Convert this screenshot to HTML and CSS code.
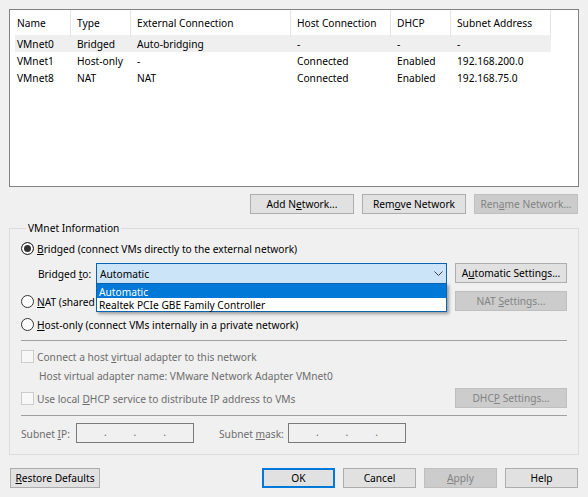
FILE: index.html
```html
<!DOCTYPE html>
<html>
<head>
    <title>Virtual Network Editor</title>
    <link rel="stylesheet" href="styles.css">
</head>
<body>
    <div class="dialog">
        <div class="net-list">
            <div class="list-head">
                <div>Name</div>
                <div>Type</div>
                <div>External Connection</div>
                <div>Host Connection</div>
                <div>DHCP</div>
                <div>Subnet Address</div>
            </div>
            <div class="list-row hot">
                <div>VMnet0</div><div>Bridged</div><div>Auto-bridging</div><div>-</div><div>-</div><div>-</div>
            </div>
            <div class="list-row">
                <div>VMnet1</div><div>Host-only</div><div>-</div><div>Connected</div><div>Enabled</div><div>192.168.200.0</div>
            </div>
            <div class="list-row">
                <div>VMnet8</div><div>NAT</div><div>NAT</div><div>Connected</div><div>Enabled</div><div>192.168.75.0</div>
            </div>
        </div>

        <div class="list-buttons">
            <button class="btn btn-wide">Add N<u>e</u>twork...</button>
            <button class="btn btn-wide">Rem<u>o</u>ve Network</button>
            <button class="btn btn-wide" disabled>Ren<u>a</u>me Network...</button>
        </div>

        <fieldset class="group">
            <legend>VMnet Information</legend>

            <div class="opt opt-bridged">
                <span class="radio on"></span>
                <span class="lbl"><u>B</u>ridged (connect VMs directly to the external network)</span>
            </div>

            <div class="bridge-row">
                <span class="bridge-label">Bridged <u>t</u>o:</span>
                <div class="combo">
                    <span>Automatic</span>
                    <svg width="9" height="5" viewBox="0 0 9 5"><polyline points="0.5,0.5 4.5,4.5 8.5,0.5" fill="none" stroke="#404040" stroke-width="1"/></svg>
                    <div class="combo-list">
                        <div class="combo-item sel">Automatic</div>
                        <div class="combo-item">Realtek PCIe GBE Family Controller</div>
                    </div>
                </div>
                <button class="btn btn-side">A<u>u</u>tomatic Settings...</button>
            </div>

            <div class="opt opt-nat">
                <span class="radio"></span>
                <span class="lbl"><u>N</u>AT (shared host's IP address with VMs)</span>
                <button class="btn btn-side" disabled>NAT <u>S</u>ettings...</button>
            </div>

            <div class="opt opt-host">
                <span class="radio"></span>
                <span class="lbl"><u>H</u>ost-only (connect VMs internally in a private network)</span>
            </div>

            <div class="sep"></div>

            <div class="opt opt-adapter off">
                <span class="check"></span>
                <span class="lbl">Connect a host <u>v</u>irtual adapter to this network</span>
            </div>
            <div class="adapter-name off">Host virtual adapter name: VMware Network Adapter VMnet0</div>

            <div class="opt opt-dhcp off">
                <span class="check"></span>
                <span class="lbl">Use local <u>D</u>HCP service to distribute IP address to VMs</span>
                <button class="btn btn-side" disabled>DHC<u>P</u> Settings...</button>
            </div>

            <div class="sep sep-low"></div>

            <div class="subnet-row off">
                <span class="lbl ip-label">Subnet <u>I</u>P:</span>
                <div class="ip-box"><span>.</span><span>.</span><span>.</span></div>
                <span class="lbl mask-label">Subnet <u>m</u>ask:</span>
                <div class="ip-box"><span>.</span><span>.</span><span>.</span></div>
            </div>
        </fieldset>

        <div class="dialog-buttons">
            <button class="btn btn-restore"><u>R</u>estore Defaults</button>
            <div class="main-buttons">
                <button class="btn btn-small btn-default">OK</button>
                <button class="btn btn-small">Cancel</button>
                <button class="btn btn-small" disabled><u>A</u>pply</button>
                <button class="btn btn-small">Help</button>
            </div>
        </div>
    </div>
</body>
</html>
```

FILE: styles.css
```css
* {
    box-sizing: border-box;
}
body {
    margin: 0;
    background: #f0f0f0;
    font-family: "Noto Sans", sans-serif;
    font-size: 10.2px;
    color: #000;
    white-space: nowrap;
}
.dialog {
    width: 588px;
    padding: 9px 9px 0 9px;
}
.net-list {
    height: 178px;
    border: 1px solid #828282;
    background: #fff;
}
.list-head {
    display: grid;
    grid-template-columns: 61px 60px 160px 100px 60px 100px;
    height: 25px;
}
.list-head div {
    border-right: 1px solid #e5e5e5;
    padding-left: 6px;
    line-height: 27px;
}
.list-head div:first-child {
    padding-left: 7px;
}
.list-row {
    display: grid;
    grid-template-columns: 56px 60px 160px 100px 60px 100px;
    width: max-content;
    margin-left: 5px;
    height: 17px;
}
.list-row div {
    padding-left: 6px;
    line-height: 19px;
}
.list-row div:first-child {
    padding-left: 2px;
}
.list-row.hot {
    background: #efefef;
}
.btn {
    height: 20px;
    padding: 0;
    font: inherit;
    color: #000;
    background: #e1e1e1;
    border: 1px solid #adadad;
}
.btn:disabled {
    background: #cccccc;
    border-color: #bfbfbf;
    color: #838383;
}
.btn-wide {
    width: 104px;
}
.btn-side {
    width: 112px;
    margin-left: auto;
}
.btn-small {
    width: 73px;
}
.btn-default {
    border: 2px solid #0078d7;
}
.btn-restore {
    width: 90px;
    margin-left: 1px;
}
.list-buttons {
    display: flex;
    justify-content: flex-end;
    gap: 8px;
    margin-top: 7px;
    padding-right: 1px;
}
.group {
    margin: 6px 0 0;
    padding: 0 11px 11px;
    border: 1px solid #dcdcdc;
    min-width: 0;
}
.group legend {
    margin-left: 5px;
    padding: 0 2px;
    line-height: 16px;
}
.opt {
    display: flex;
    align-items: center;
    height: 16px;
}
.lbl {
    padding-top: 2px;
}
.opt-bridged {
    margin-top: 4px;
}
.opt-nat {
    margin-top: 7px;
    height: 20px;
}
.opt-host {
    margin-top: 5px;
}
.opt-adapter {
    margin-top: 7px;
}
.opt-dhcp {
    margin-top: 5px;
    height: 20px;
}
.radio {
    flex: none;
    width: 13px;
    height: 13px;
    margin-right: 3px;
    border: 1px solid #333;
    border-radius: 50%;
    background: #fff;
}
.radio.on {
    background: #333;
    box-shadow: inset 0 0 0 2px #fff;
}
.check {
    flex: none;
    width: 13px;
    height: 13px;
    margin-right: 3px;
    border: 1px solid #cccccc;
    background: #f7f7f7;
}
.off {
    color: #6d6d6d;
}
.bridge-row {
    display: flex;
    align-items: flex-start;
    height: 21px;
    margin-top: 7px;
}
.bridge-label {
    width: 58px;
    height: 21px;
    margin-left: 17px;
    line-height: 23px;
}
.combo {
    position: relative;
    display: flex;
    align-items: center;
    justify-content: space-between;
    width: 351px;
    height: 21px;
    padding: 1px 3px 0;
    border: 1px solid #0a64ad;
    background: #cce4f7;
}
.combo svg {
    margin-bottom: 1px;
}
.combo-list {
    position: absolute;
    z-index: 2;
    top: 100%;
    left: -1px;
    width: 351px;
    border: 1px solid #0a64ad;
    background: #fff;
    box-shadow: 2px 2px 3px rgba(0, 0, 0, 0.35);
}
.combo-item {
    height: 13px;
    line-height: 15px;
    padding-left: 2px;
}
.combo-item.sel {
    height: 14px;
    line-height: 16px;
    background: #0078d7;
    color: #fff;
}
.sep {
    margin-top: 8px;
    border-top: 1px solid #a0a0a0;
}
.sep-low {
    margin-top: 7px;
}
.adapter-name {
    height: 16px;
    margin-top: 3px;
    padding-left: 18px;
    line-height: 18px;
}
.subnet-row {
    display: flex;
    align-items: center;
    height: 20px;
    margin-top: 7px;
}
.ip-label {
    width: 55px;
}
.mask-label {
    width: 69px;
    margin-left: 25px;
}
.ip-box {
    display: flex;
    justify-content: space-evenly;
    width: 118px;
    height: 20px;
    line-height: 17px;
    border: 1px solid #7a7a7a;
}
.dialog-buttons {
    display: flex;
    align-items: center;
    margin-top: 13px;
}
.main-buttons {
    display: flex;
    gap: 8px;
    margin-left: auto;
    padding-right: 1px;
}
```
